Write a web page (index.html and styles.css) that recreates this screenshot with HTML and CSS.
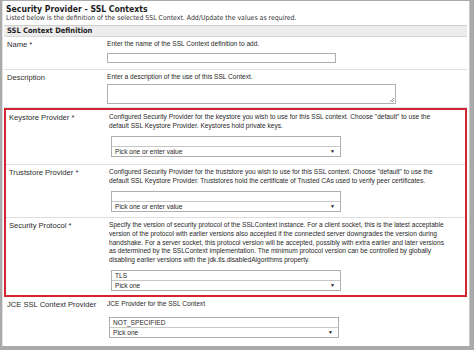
FILE: index.html
```html
<!DOCTYPE html>
<html>
<head>
    <meta charset="utf-8">
    <title>Security Provider - SSL Contexts</title>
    <link rel="stylesheet" href="styles.css">
</head>
<body>
    <div class="frame">
        <div class="panel">
            <div class="page-title">Security Provider - SSL Contexts</div>
            <div class="page-sub">Listed below is the definition of the selected SSL Context. Add/Update the values as required.</div>

            <div class="section-head">SSL Context Definition</div>

            <div class="row row-name">
                <div class="label">Name *</div>
                <div class="field">
                    <p class="desc">Enter the name of the SSL Context definition to add.</p>
                    <div class="text-input"></div>
                </div>
            </div>

            <div class="row row-descr">
                <div class="label">Description</div>
                <div class="field">
                    <p class="desc">Enter a description of the use of this SSL Context.</p>
                    <div class="text-area"><span class="grip"></span></div>
                </div>
            </div>

            <div class="highlight">
                <div class="row row-key">
                    <div class="label">Keystore Provider *</div>
                    <div class="field">
                        <p class="desc">Configured Security Provider for the keystore you wish to use for this SSL context. Choose "default" to use the default SSL Keystore Provider. Keystores hold private keys.</p>
                        <div class="combo">
                            <div class="combo-input"></div>
                            <div class="combo-select">Pick one or enter value<span class="arrow">&#9660;</span></div>
                        </div>
                    </div>
                </div>

                <div class="row row-trust">
                    <div class="label">Truststore Provider *</div>
                    <div class="field">
                        <p class="desc">Configured Security Provider for the truststore you wish to use for this SSL context. Choose "default" to use the default SSL Keystore Provider. Truststores hold the certificate of Trusted CAs used to verify peer certificates.</p>
                        <div class="combo">
                            <div class="combo-input"></div>
                            <div class="combo-select">Pick one or enter value<span class="arrow">&#9660;</span></div>
                        </div>
                    </div>
                </div>

                <div class="row row-proto">
                    <div class="label">Security Protocol *</div>
                    <div class="field">
                        <p class="desc">Specify the version of security protocol of the SSLContext instance. For a client socket, this is the latest acceptable version of the protocol with earlier versions also accepted if the connected server downgrades the version during handshake. For a server socket, this protocol version will be accepted, possibly with extra earlier and later versions as determined by the SSLContext implementation. The minimum protocol version can be controlled by globally disabling earlier versions with the jdk.tls.disabledAlgorithms property.</p>
                        <div class="combo">
                            <div class="combo-input">TLS</div>
                            <div class="combo-select">Pick one<span class="arrow">&#9660;</span></div>
                        </div>
                    </div>
                </div>
            </div>

            <div class="row row-jce">
                <div class="label">JCE SSL Context Provider</div>
                <div class="field">
                    <p class="desc">JCE Provider for the SSL Context</p>
                    <div class="combo">
                        <div class="combo-input">NOT_SPECIFIED</div>
                        <div class="combo-select">Pick one<span class="arrow">&#9660;</span></div>
                    </div>
                </div>
            </div>
        </div>
    </div>
</body>
</html>
```

FILE: styles.css
```css
html, body {
    margin: 0px;
    padding: 0px;
    width: 474px;
    height: 350px;
    overflow: hidden;
    background-color: rgb(170, 170, 170);
}

.frame {
    padding: 1px 4px 4px 2px;
    height: 345px;
}

.panel {
    background-color: rgb(255, 255, 255);
    height: 100%;
    border-right: 1px solid rgb(200, 200, 200);
    border-left: 1px solid rgb(225, 225, 225);
    box-sizing: border-box;
    padding: 0px 2px 0px 1px;
    font-family: "Liberation Sans", Arial, sans-serif;
    color: rgb(40, 40, 40);
}

.page-title {
    font-family: "DejaVu Sans Condensed", "DejaVu Sans", sans-serif;
    font-weight: bold;
    font-size: 8.6px;
    padding: 3px 0px 0px 2px;
    height: 10px;
    line-height: 10px;
    color: rgb(30, 30, 30);
}

.page-sub {
    font-family: "DejaVu Sans Condensed", "DejaVu Sans", sans-serif;
    font-size: 6.9px;
    padding-left: 2px;
    height: 11px;
    line-height: 9px;
    color: rgb(50, 50, 50);
}

.section-head {
    font-family: "DejaVu Sans Condensed", "DejaVu Sans", sans-serif;
    font-weight: bold;
    font-size: 7.5px;
    height: 10px;
    line-height: 10px;
    padding-left: 3px;
    background-color: rgb(236, 236, 236);
    border-top: 1px solid rgb(205, 205, 205);
    border-bottom: 1px solid rgb(215, 215, 215);
    color: rgb(30, 30, 30);
}

.row {
    display: grid;
    grid-template-columns: 103px 1fr;
    border-bottom: 1px solid rgb(222, 222, 222);
    box-sizing: border-box;
}

.label {
    font-size: 7.6px;
    line-height: 9px;
    padding: 3px 0px 0px 3px;
    color: rgb(45, 45, 45);
}

.field {
    padding-top: 3px;
    padding-right: 14px;
}

.desc {
    margin: 0px;
    font-size: 6.6px;
    line-height: 8.8px;
    color: rgb(40, 40, 40);
}

.row-name { height: 33px; }
.row-descr { height: 38px; }
.row-key { height: 55px; }
.row-trust { height: 53px; }
.row-proto { height: 76px; border-bottom: none; }
.row-jce { height: 47px; border-bottom: none; }

.text-input {
    margin-top: 4px;
    width: 229px;
    height: 10px;
    border: 1px solid rgb(175, 175, 175);
    box-sizing: border-box;
}

.text-area {
    position: relative;
    margin-top: 2px;
    width: 289px;
    height: 20px;
    border: 1px solid rgb(175, 175, 175);
    box-sizing: border-box;
}

.grip {
    position: absolute;
    right: 1px;
    bottom: 1px;
    width: 4px;
    height: 4px;
    background: linear-gradient(135deg, transparent 45%, rgb(150, 150, 150) 45%, rgb(150, 150, 150) 55%, transparent 55%, transparent 70%, rgb(150, 150, 150) 70%, rgb(150, 150, 150) 80%, transparent 80%);
}

.highlight {
    border: 2px solid rgb(212, 38, 50);
    box-sizing: border-box;
    height: 189px;
}

.combo {
    margin-top: 5px;
    margin-left: 2px;
    width: 230px;
    border: 1px solid rgb(175, 175, 175);
    box-sizing: border-box;
    font-size: 6.6px;
    color: rgb(40, 40, 40);
}

.row-proto .combo { margin-top: 5px; }
.row-jce .combo { margin-top: 8px; }

.combo-input {
    height: 9px;
    line-height: 10px;
    padding-left: 3px;
    border-bottom: 1px solid rgb(200, 200, 200);
}

.combo-select {
    display: flex;
    justify-content: space-between;
    height: 9px;
    line-height: 9px;
    padding: 0px 5px 0px 3px;
}

.arrow {
    font-size: 5px;
    color: rgb(20, 20, 20);
}
```
